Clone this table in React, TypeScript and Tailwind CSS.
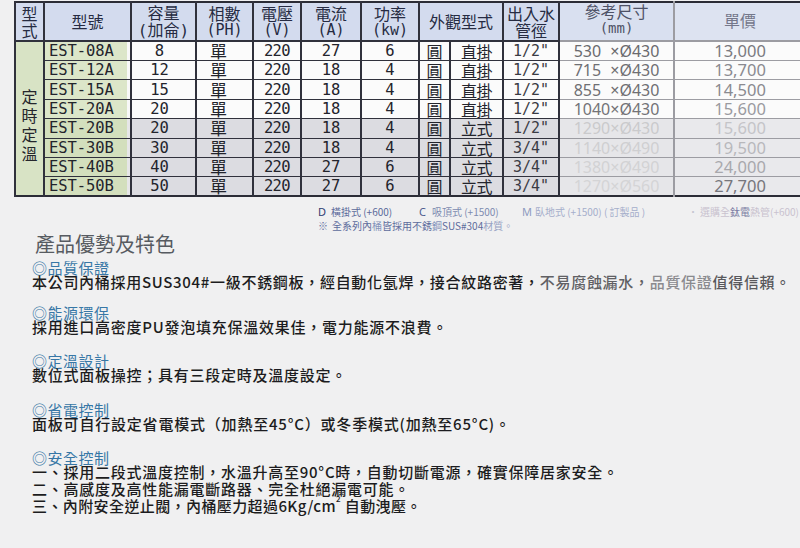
import React from "react";

const cjk = "font-['Noto_Sans_CJK_TC','Noto_Sans',sans-serif]";
const mono = "font-['DejaVu_Sans_Mono','Liberation_Mono',monospace]";

type Row = {
  model: string;
  cap: string;
  a: string;
  kw: string;
  look: string;
  pipe: string;
  size: string;
  price: string;
  shade: boolean;
  sizeCls: string;
  priceCls: string;
};

const rows: Row[] = [
  { model: "EST-08A", cap: "8", a: "27", kw: "6", look: "直掛", pipe: '1/2"', size: "530\u2007\u00d7\u00d8430", price: "13,000", shade: false, sizeCls: "text-[#6a6a6e]", priceCls: "text-[#7a7a80]" },
  { model: "EST-12A", cap: "12", a: "18", kw: "4", look: "直掛", pipe: '1/2"', size: "715\u2007\u00d7\u00d8430", price: "13,700", shade: false, sizeCls: "text-[#6f6f73]", priceCls: "text-[#8a8a90]" },
  { model: "EST-15A", cap: "15", a: "18", kw: "4", look: "直掛", pipe: '1/2"', size: "855\u2007\u00d7\u00d8430", price: "14,500", shade: false, sizeCls: "text-[#6f6f73]", priceCls: "text-[#8a8a90]" },
  { model: "EST-20A", cap: "20", a: "18", kw: "4", look: "直掛", pipe: '1/2"', size: "1040\u00d7\u00d8430", price: "15,600", shade: false, sizeCls: "text-[#737377]", priceCls: "text-[#9a9aa0]" },
  { model: "EST-20B", cap: "20", a: "18", kw: "4", look: "立式", pipe: '1/2"', size: "1290\u00d7\u00d8430", price: "15,600", shade: true, sizeCls: "text-[#cacacc]", priceCls: "text-[#c4c4c8]" },
  { model: "EST-30B", cap: "30", a: "18", kw: "4", look: "立式", pipe: '3/4"', size: "1140\u00d7\u00d8490", price: "19,500", shade: true, sizeCls: "text-[#cfcfd1]", priceCls: "text-[#b8b8bc]" },
  { model: "EST-40B", cap: "40", a: "27", kw: "6", look: "立式", pipe: '3/4"', size: "1380\u00d7\u00d8490", price: "24,000", shade: true, sizeCls: "text-[#d2d2d4]", priceCls: "text-[#a8a8ac]" },
  { model: "EST-50B", cap: "50", a: "27", kw: "6", look: "立式", pipe: '3/4"', size: "1270\u00d7\u00d8560", price: "27,700", shade: true, sizeCls: "text-[#d4d4d6]", priceCls: "text-[#76767c]" },
];

const L = "border-x-2 border-y border-[#30313c] p-0";
const R = "border-x-2 border-y border-[#9c9ca2] p-0";

const sub = "text-[15px] leading-[14px] text-[#3777a6] tracking-[0.5px]";
const body = "text-[15px] leading-[14px] text-[#1c1c20] font-medium whitespace-nowrap";

export default function App() {
  return (
    <div className={`w-[800px] h-[548px] overflow-hidden bg-[#f0f0f1] ${cjk}`}>
      {/* spec table */}
      <div className="pl-[14px] pt-[1px]">
        <table className="table-fixed border-collapse w-[791px] border-2 border-[#2b2c36]">
          <colgroup>
            <col className="w-[29px]" />
            <col className="w-[87px]" />
            <col className="w-[65px]" />
            <col className="w-[57px]" />
            <col className="w-[48px]" />
            <col className="w-[60px]" />
            <col className="w-[58px]" />
            <col className="w-[31px]" />
            <col className="w-[53px]" />
            <col className="w-[56px]" />
            <col className="w-[115px]" />
            <col className="w-[132px]" />
          </colgroup>
          <thead>
            <tr className="h-[39px] bg-[#d3dbee] text-[#262b42] text-[16px] leading-[17px] font-normal">
              <th className={`${L} border-b-2 font-normal`}>
                <div className="flex flex-col items-center">
                  <span>型</span>
                  <span>式</span>
                </div>
              </th>
              <th className={`${L} border-b-2 font-normal`}>型號</th>
              <th className={`${L} border-b-2 font-normal`}>
                <div className="flex flex-col items-center">
                  <span>容量</span>
                  <span>
                    <span className={mono}>(</span>加侖<span className={mono}>)</span>
                  </span>
                </div>
              </th>
              <th className={`${L} border-b-2 font-normal`}>
                <div className="flex flex-col items-center">
                  <span>相數</span>
                  <span className={`${mono} text-[15px]`}>(PH)</span>
                </div>
              </th>
              <th className={`${L} border-b-2 font-normal`}>
                <div className="flex flex-col items-center">
                  <span>電壓</span>
                  <span className={`${mono} text-[15px]`}>(V)</span>
                </div>
              </th>
              <th className={`${L} border-b-2 font-normal`}>
                <div className="flex flex-col items-center">
                  <span>電流</span>
                  <span className={`${mono} text-[15px]`}>(A)</span>
                </div>
              </th>
              <th className={`${L} border-b-2 font-normal`}>
                <div className="flex flex-col items-center">
                  <span>功率</span>
                  <span className={`${mono} text-[15px]`}>(kw)</span>
                </div>
              </th>
              <th colSpan={2} className={`${L} border-b-2 font-normal`}>
                外觀型式
              </th>
              <th className={`${L} border-b-2 font-normal`}>
                <div className="flex flex-col items-center">
                  <span>出入水</span>
                  <span>管徑</span>
                </div>
              </th>
              <th className={`${R} border-b-2 font-normal bg-[#d9e0f0] text-[#4e5266]`}>
                <div className="flex flex-col items-center -mt-[3px]">
                  <span>參考尺寸</span>
                  <span className={`${mono} text-[14px]`}>(mm)</span>
                </div>
              </th>
              <th className={`${R} border-b-2 font-normal bg-[#dde3f1] text-[#74778a]`}>
                <span className="relative -top-[1px]">單價</span>
              </th>
            </tr>
          </thead>
          <tbody>
            {rows.map((r, i) => (
              <tr
                key={r.model}
                className={`h-[19.4px] text-[#23242c] ${r.shade ? "bg-[#dcdce1]" : "bg-[#fbfbfb]"}`}
              >
                {i === 0 && (
                  <td rowSpan={8} className={`${L} bg-[#d8e3c5] align-middle`}>
                    <div className="flex flex-col items-center text-[16px] leading-[19px] text-[#25262c] pt-[12px]">
                      <span>定</span>
                      <span>時</span>
                      <span>定</span>
                      <span>溫</span>
                    </div>
                  </td>
                )}
                <td
                  className={`${L} ${r.shade ? "bg-[#d3dfbd] shadow-[inset_-3px_0_0_#e6e6e8]" : "bg-[#dce6c9] shadow-[inset_-3px_0_0_#f8f8f8]"}`}
                >
                  <div className={`${mono} text-[15.5px] leading-[18px] pl-[4px] tracking-[-0.1px]`}>{r.model}</div>
                </td>
                <td className={L}>
                  <div className={`${mono} text-[15.5px] leading-[18px] text-center pr-[8px]`}>{r.cap}</div>
                </td>
                <td className={L}>
                  <div className="text-[17px] leading-[18px] text-center pr-[12px]">單</div>
                </td>
                <td className={L}>
                  <div className={`${mono} text-[15.5px] leading-[18px] text-center tracking-[-0.6px]`}>220</div>
                </td>
                <td className={L}>
                  <div className={`${mono} text-[15.5px] leading-[18px] text-center`}>{r.a}</div>
                </td>
                <td className={L}>
                  <div className={`${mono} text-[15.5px] leading-[18px] text-center`}>{r.kw}</div>
                </td>
                <td className={L}>
                  <div className="text-[16px] leading-[18px] text-center">圓</div>
                </td>
                <td className={L}>
                  <div className="text-[16px] leading-[18px] text-center tracking-[-0.5px]">{r.look}</div>
                </td>
                <td className={L}>
                  <div className={`${mono} text-[15px] leading-[18px] text-center text-[#3a3b44]`}>{r.pipe}</div>
                </td>
                <td className={`${R} ${r.shade ? "bg-[#e6e6e9]" : ""}`}>
                  <div className={`font-['Noto_Sans',sans-serif] text-[16px] leading-[18px] text-center ${r.sizeCls}`}>{r.size}</div>
                </td>
                <td className={`${R} ${r.shade ? "bg-[#e9e9ec]" : ""}`}>
                  <div className={`font-['Noto_Sans',sans-serif] text-[16.5px] leading-[18px] text-center ${r.priceCls}`}>{r.price}</div>
                </td>
              </tr>
            ))}
          </tbody>
        </table>
      </div>

      {/* notes */}
      <div className="mt-[8px] pl-[318px] text-[10px] leading-[14px] whitespace-nowrap">
        <div className="flex items-center">
          <span className="w-[13px] font-['Noto_Sans',sans-serif] text-[11px] text-[#2f3c72]">D</span>
          <span className="w-[88px] text-[#5b6a9a]">橫掛式 (+600)</span>
          <span className="w-[13px] font-['Noto_Sans',sans-serif] text-[11px] text-[#4e5d8e]">C</span>
          <span className="w-[90px] text-[#7d8bb0]">吸頂式 (+1500)</span>
          <span className="w-[13px] font-['Noto_Sans',sans-serif] text-[11px] text-[#8e9bc0]">M</span>
          <span className="w-[153px] text-[#a5aecb]">臥地式 (+1500) ( 訂製品 )</span>
          <span className="w-[12px] text-[#c6c6d2]">‧</span>
          <span className="text-[#c9c2cf]">
            選購全<span className="text-[#7d7fa4]">鈦電</span>熱管(+600)
          </span>
        </div>
        <div className="flex items-center">
          <span className="w-[14px] text-[#6372a2]">※</span>
          <span className="text-[#5d6c9c]">
            全系列內<span className="text-[#8594bb]">桶</span>皆採用不銹<span className="text-[#8594bb]">鋼</span>SUS#304<span className="text-[#98a3c4]">材質。</span>
          </span>
        </div>
      </div>

      {/* features */}
      <div className="pl-[32px] flex flex-col">
        <div className="-mt-[1px] ml-[3px] text-[20px] leading-[24px] text-[#575b61]">產品優勢及特色</div>

        <div className={`mt-[5px] ${sub}`}>◎品質保證</div>
        <div className={`${body} tracking-[0.7px]`}>
          本公司內桶採用SUS304#一級不銹鋼板，經自動化氬焊，接合紋路密著，
          <span className="text-[#606064]">不易腐蝕漏水，</span>
          <span className="text-[#8a8a8e]">品質保證</span>
          <span className="text-[#58585c]">值得信賴。</span>
        </div>

        <div className={`mt-[17px] ${sub}`}>◎能源環保</div>
        <div className={`${body} tracking-[0.75px]`}>採用進口高密度PU發泡填充保溫效果佳，電力能源不浪費。</div>

        <div className={`mt-[20px] ${sub}`}>◎定溫設計</div>
        <div className={`${body} tracking-[0.75px]`}>數位式面板操控；具有三段定時及溫度設定。</div>

        <div className={`mt-[21px] ${sub}`}>◎省電控制</div>
        <div className={`${body} tracking-[0.8px]`}>面板可自行設定省電模式（加熱至45°C）或冬季模式(加熱至65°C)。</div>

        <div className={`mt-[20px] ${sub}`}>◎安全控制</div>
        <div className={`${body} tracking-[0.75px]`}>
          一、採用二段式溫度控制，水溫升高至90°C時，自動切斷電源，確實保障居家安全。
        </div>
        <div className={`mt-[3px] ${body} tracking-[0.75px]`}>二、高感度及高性能漏電斷路器、完全杜絕漏電可能。</div>
        <div className={`mt-[3px] ${body} tracking-[0.4px]`}>
          三、內附安全逆止閥，內桶壓力超過6Kg/cm<sup className="text-[8px] align-super">2</sup> 自動洩壓。
        </div>
      </div>
    </div>
  );
}
